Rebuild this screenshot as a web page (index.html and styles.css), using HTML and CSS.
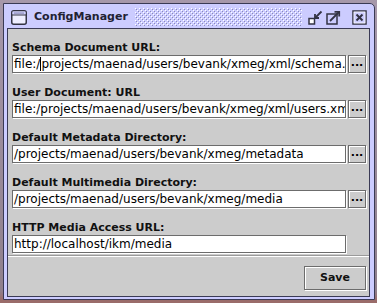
FILE: index.html
```html
<!DOCTYPE html>
<html>
<head>
<meta charset="utf-8">
<link rel="stylesheet" href="styles.css">
</head>
<body>
<div class="window">
  <div class="titlebar">
    <svg class="ticon" width="16" height="15" viewBox="0 0 16 15">
      <rect x="0.75" y="0.75" width="14.5" height="13.5" rx="2" fill="#eeeeff" stroke="#333344" stroke-width="1.5"/>
      <rect x="1.5" y="1.5" width="13" height="3" fill="#ccccff"/>
      <line x1="1" y1="5" x2="15" y2="5" stroke="#333344" stroke-width="1"/>
      <circle cx="4" cy="3" r="0.6" fill="#333344"/>
      <circle cx="6" cy="3" r="0.6" fill="#333344"/>
      <circle cx="8" cy="3" r="0.6" fill="#333344"/>
      <circle cx="10" cy="3" r="0.6" fill="#333344"/>
      <circle cx="12" cy="3" r="0.6" fill="#333344"/>
    </svg>
    <span class="ttext">ConfigManager</span>
    <svg class="bumps" width="167" height="18">
      <defs>
        <pattern id="bp" width="4" height="4" patternUnits="userSpaceOnUse">
          <rect x="0" y="0" width="1" height="1" fill="#ffffff"/>
          <rect x="2" y="2" width="1" height="1" fill="#ffffff"/>
          <rect x="1" y="1" width="1" height="1" fill="#8a8ab8"/>
          <rect x="3" y="3" width="1" height="1" fill="#8a8ab8"/>
        </pattern>
      </defs>
      <rect width="167" height="18" fill="url(#bp)"/>
    </svg>
    <div class="tbtns">
      <svg class="tb" width="15" height="15" viewBox="0 0 15 15">
        <rect x="1" y="8.5" width="5.5" height="5.5" fill="#ffffff" stroke="#333344" stroke-width="1.5"/>
        <line x1="13.5" y1="1.5" x2="7" y2="8" stroke="#333344" stroke-width="1.8"/>
        <polyline points="7,4 7,8 11,8" fill="none" stroke="#333344" stroke-width="1.8"/>
      </svg>
      <svg class="tb" width="15" height="15" viewBox="0 0 15 15">
        <rect x="1" y="4" width="10" height="10" fill="#ccccff" stroke="#333344" stroke-width="1.5"/>
        <line x1="4" y1="11" x2="13" y2="2" stroke="#333344" stroke-width="1.8"/>
        <polyline points="8.5,1.8 13.2,1.8 13.2,6.5" fill="none" stroke="#333344" stroke-width="1.8"/>
      </svg>
      <svg class="tb close" width="15" height="15" viewBox="0 0 15 15">
        <rect x="1" y="1" width="13" height="13" fill="#ccccff" stroke="#333344" stroke-width="1.5"/>
        <rect x="2" y="2" width="11" height="11" fill="none" stroke="#ffffff" stroke-width="0.8"/>
        <line x1="4.5" y1="4.5" x2="10.5" y2="10.5" stroke="#333344" stroke-width="2"/>
        <line x1="10.5" y1="4.5" x2="4.5" y2="10.5" stroke="#333344" stroke-width="2"/>
      </svg>
    </div>
  </div>
  <div class="content">
    <div class="rows">
      <div class="row">
        <div class="label">Schema Document URL:</div>
        <div class="line">
          <div class="field">file:/<span class="caret"></span>projects/maenad/users/bevank/xmeg/xml/schema.</div>
          <div class="dots">...</div>
        </div>
      </div>
      <div class="row">
        <div class="label">User Document: URL</div>
        <div class="line">
          <div class="field">file:/projects/maenad/users/bevank/xmeg/xml/users.xml</div>
          <div class="dots">...</div>
        </div>
      </div>
      <div class="row">
        <div class="label">Default Metadata Directory:</div>
        <div class="line">
          <div class="field">/projects/maenad/users/bevank/xmeg/metadata</div>
          <div class="dots">...</div>
        </div>
      </div>
      <div class="row">
        <div class="label">Default Multimedia Directory:</div>
        <div class="line">
          <div class="field">/projects/maenad/users/bevank/xmeg/media</div>
          <div class="dots">...</div>
        </div>
      </div>
      <div class="row">
        <div class="label">HTTP Media Access URL:</div>
        <div class="line">
          <div class="field">http://localhost/ikm/media</div>
        </div>
      </div>
    </div>
    <div class="footer">
      <div class="save">Save</div>
    </div>
  </div>
</div>
</body>
</html>
```
FILE: styles.css
```css
html, body {
  margin: 0;
  padding: 0;
}
body {
  width: 377px;
  height: 303px;
  overflow: hidden;
  background: linear-gradient(to bottom, #a698aa 0%, #8f7f8c 96%, #9a6c6a 99%);
  font-family: "DejaVu Sans", "Liberation Sans", sans-serif;
  font-size: 12px;
  color: #000;
}
.window {
  box-sizing: border-box;
  margin: 3px 0 0 3px;
  width: 372px;
  height: 297px;
  border: 1px solid #3a3a55;
  border-top-right-radius: 5px;
  background: #ccccff;
  padding: 0 4px 2px 3px;
  display: flex;
  flex-direction: column;
}
.titlebar {
  height: 24px;
  display: flex;
  align-items: center;
}
.ticon {
  margin-left: 4px;
  margin-top: 2px;
  flex: none;
}
.ttext {
  margin-left: 7px;
  font-weight: bold;
  font-size: 11px;
  color: #222233;
  margin-top: 1px;
}
.bumps {
  margin-left: 7px;
  flex: none;
  margin-top: 1px;
}
.tbtns {
  margin-left: auto;
  display: flex;
  align-items: center;
  margin-right: 3px;
  margin-top: 2px;
}
.tb {
  flex: none;
  margin-left: 3px;
}
.tb.close {
  margin-left: 11px;
}
.content {
  flex: 1;
  background: #cccccc;
  border: 1px solid #3a3a55;
  display: flex;
  flex-direction: column;
}
.rows {
  padding: 11px 4px 0 4px;
  display: flex;
  flex-direction: column;
  gap: 12px;
}
.label {
  font-weight: bold;
  font-size: 11px;
  line-height: 15px;
  height: 15px;
  color: #111;
  white-space: nowrap;
}
.line {
  display: flex;
  gap: 1px;
  height: 18px;
}
.field {
  box-sizing: border-box;
  width: 334px;
  height: 18px;
  background: #fff;
  border: 1px solid #6c6c6c;
  box-shadow: 1px 1px 0 #ffffff;
  padding: 0 1px;
  line-height: 16px;
  white-space: nowrap;
  overflow: hidden;
  flex: none;
}
.caret {
  display: inline-block;
  width: 0;
  height: 14px;
  border-left: 1px solid #000;
  vertical-align: -3px;
}
.dots {
  box-sizing: border-box;
  width: 18px;
  height: 18px;
  margin-left: 1px;
  border: 1px solid #6c6c6c;
  box-shadow: inset 1px 1px 0 #fff, 1px 1px 0 #fff;
  background: #cccccc;
  font-weight: bold;
  font-size: 11px;
  line-height: 14px;
  text-align: center;
  flex: none;
}
.footer {
  margin-top: 2px;
  border-top: 1px solid #9a9a9a;
  box-shadow: inset 0 1px 0 #ffffff;
  padding: 10px 3px 0 0;
  display: flex;
  justify-content: flex-end;
}
.save {
  box-sizing: border-box;
  width: 62px;
  height: 24px;
  border: 1px solid #6c6c6c;
  box-shadow: inset 1px 1px 0 #fff, 1px 1px 0 #fff;
  font-weight: bold;
  font-size: 11px;
  line-height: 22px;
  text-align: center;
  color: #111;
}
```
